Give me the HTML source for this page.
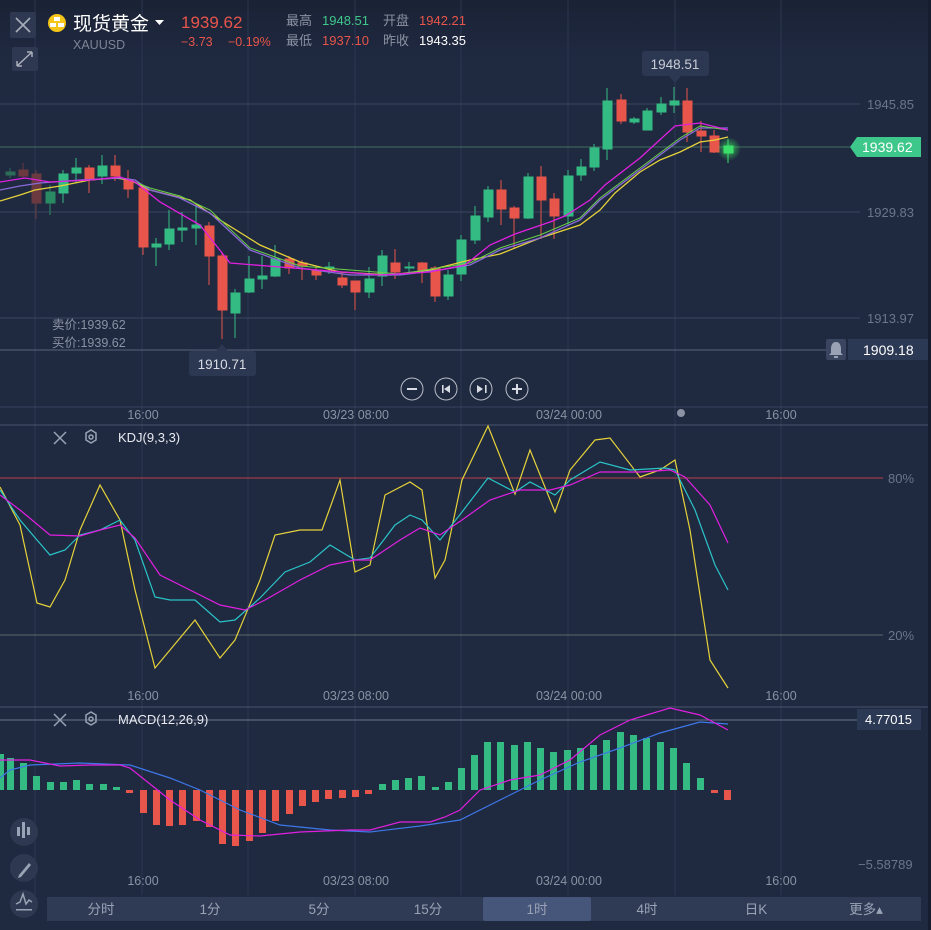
<!DOCTYPE html>
<html><head><meta charset="utf-8"><style>
*{margin:0;padding:0}
body{width:931px;height:930px;background:#1f2940;overflow:hidden;position:relative;font-family:"Liberation Sans","Noto Sans CJK SC",sans-serif}
.t{position:absolute;white-space:nowrap}
</style></head><body>
<svg width="931" height="930" style="position:absolute;left:0;top:0" font-family="Liberation Sans, Noto Sans CJK SC, sans-serif">
<defs><linearGradient id="tg" x1="0" y1="0" x2="0" y2="1"><stop offset="0" stop-color="#1a2235"/><stop offset="1" stop-color="#1f2940"/></linearGradient>
<radialGradient id="gl"><stop offset="0" stop-color="#3cff60" stop-opacity=".7"/><stop offset="1" stop-color="#3cff60" stop-opacity="0"/></radialGradient></defs>
<rect x="0" y="0" width="931" height="60" fill="url(#tg)"/>
<rect x="928" y="0" width="3" height="930" fill="#161d2e"/>
<!-- vertical grid -->
<g stroke="#2c3650" stroke-width="1">
<line x1="35" y1="0" x2="35" y2="895"/><line x1="142" y1="0" x2="142" y2="895"/><line x1="248" y1="0" x2="248" y2="895"/><line x1="355" y1="0" x2="355" y2="895"/><line x1="461" y1="0" x2="461" y2="895"/><line x1="568" y1="0" x2="568" y2="895"/><line x1="675" y1="0" x2="675" y2="895"/><line x1="781" y1="0" x2="781" y2="895"/>
</g>
<!-- horizontal grid main -->
<g stroke="#3a4560"><line x1="0" y1="104" x2="860" y2="104"/><line x1="0" y1="212" x2="860" y2="212"/><line x1="0" y1="318" x2="860" y2="318"/></g>
<line x1="0" y1="147" x2="850" y2="147" stroke="#3f6e60"/>
<line x1="0" y1="350" x2="826" y2="350" stroke="#5a6378"/>
<line x1="0" y1="407" x2="928" y2="407" stroke="#384360"/>
<line x1="0" y1="425" x2="928" y2="425" stroke="#4a546b"/>
<line x1="0" y1="478" x2="883" y2="478" stroke="#b8404a"/>
<line x1="0" y1="635" x2="883" y2="635" stroke="#5a6a70"/>
<line x1="0" y1="707" x2="928" y2="707" stroke="#4a546b"/>
<line x1="0" y1="720" x2="857" y2="720" stroke="#6a7388"/>
<!-- axis labels -->
<g fill="#6c7589" font-size="13"><text x="867" y="109">1945.85</text><text x="867" y="217">1929.83</text><text x="867" y="323">1913.97</text><text x="888" y="483">80%</text><text x="888" y="640">20%</text><text x="858" y="869">−5.58789</text></g>
<g fill="#8a92a3" font-size="12.5" text-anchor="middle"><text x="143" y="419">16:00</text><text x="356" y="419">03/23 08:00</text><text x="569" y="419">03/24 00:00</text><text x="781" y="419">16:00</text>
<text x="143" y="700">16:00</text><text x="356" y="700">03/23 08:00</text><text x="569" y="700">03/24 00:00</text><text x="781" y="700">16:00</text>
<text x="143" y="885">16:00</text><text x="356" y="885">03/23 08:00</text><text x="569" y="885">03/24 00:00</text><text x="781" y="885">16:00</text></g>
<circle cx="681" cy="413" r="4" fill="#8a92a3"/>
<!-- candles -->
<g stroke-width="1">
<g stroke="#2d6d5a" fill="#2d6d5a"><line x1="10" y1="168" x2="10" y2="178"/><rect x="6" y="172" width="9" height="3"/></g>
<g stroke="#6a3a40" fill="#6a3a40"><line x1="23" y1="163" x2="23" y2="178"/><rect x="19" y="170" width="9" height="6"/><line x1="36" y1="170" x2="36" y2="219"/><rect x="32" y="174" width="9" height="29"/></g>
<g stroke="#2a8a63" fill="#2a8a63"><line x1="50" y1="185" x2="50" y2="215"/><rect x="46" y="192" width="9" height="11"/></g>
<g stroke="#34bb83" fill="#34bb83">
<line x1="63" y1="170" x2="63" y2="203"/><rect x="59" y="174" width="9" height="19"/>
<line x1="76" y1="158" x2="76" y2="183"/><rect x="72" y="168" width="9" height="5"/>
<line x1="102" y1="155" x2="102" y2="184"/><rect x="98" y="166" width="9" height="10"/>
<line x1="156" y1="238" x2="156" y2="266"/><rect x="152" y="244" width="9" height="3"/>
<line x1="169" y1="210" x2="169" y2="250"/><rect x="165" y="229" width="9" height="15"/>
<line x1="182" y1="212" x2="182" y2="242"/><rect x="178" y="228" width="9" height="2"/>
<line x1="196" y1="205" x2="196" y2="245"/><rect x="192" y="225" width="9" height="3"/>
<line x1="235" y1="289" x2="235" y2="338"/><rect x="231" y="293" width="9" height="20"/>
<line x1="249" y1="256" x2="249" y2="293"/><rect x="245" y="279" width="9" height="13"/>
<line x1="262" y1="256" x2="262" y2="289"/><rect x="258" y="276" width="9" height="3"/>
<line x1="275" y1="245" x2="275" y2="277"/><rect x="271" y="259" width="9" height="17"/>
<line x1="329" y1="262" x2="329" y2="274"/><rect x="325" y="267" width="9" height="1"/>
<line x1="369" y1="267" x2="369" y2="298"/><rect x="365" y="279" width="9" height="13"/>
<line x1="382" y1="250" x2="382" y2="286"/><rect x="378" y="256" width="9" height="20"/>
<line x1="409" y1="262" x2="409" y2="272"/><rect x="405" y="267" width="9" height="1"/>
<line x1="448" y1="270" x2="448" y2="300"/><rect x="444" y="275" width="9" height="21"/>
<line x1="461" y1="235" x2="461" y2="281"/><rect x="457" y="240" width="9" height="34"/>
<line x1="475" y1="206" x2="475" y2="244"/><rect x="471" y="216" width="9" height="24"/>
<line x1="488" y1="186" x2="488" y2="222"/><rect x="484" y="190" width="9" height="27"/>
<line x1="528" y1="173" x2="528" y2="219"/><rect x="524" y="177" width="9" height="41"/>
<line x1="568" y1="170" x2="568" y2="226"/><rect x="564" y="176" width="9" height="40"/>
<line x1="581" y1="159" x2="581" y2="181"/><rect x="577" y="167" width="9" height="8"/>
<line x1="594" y1="144" x2="594" y2="171"/><rect x="590" y="148" width="9" height="19"/>
<line x1="607" y1="88" x2="607" y2="160"/><rect x="603" y="101" width="9" height="48"/>
<line x1="634" y1="117" x2="634" y2="124"/><rect x="630" y="119" width="9" height="3"/>
<line x1="647" y1="108" x2="647" y2="130"/><rect x="643" y="111" width="9" height="19"/>
<line x1="661" y1="97" x2="661" y2="115"/><rect x="657" y="104" width="9" height="8"/>
<line x1="674" y1="87" x2="674" y2="113"/><rect x="670" y="101" width="9" height="4"/>
</g>
<g stroke="#e8554a" fill="#e8554a">
<line x1="89" y1="165" x2="89" y2="193"/><rect x="85" y="168" width="9" height="12"/>
<line x1="115" y1="155" x2="115" y2="181"/><rect x="111" y="166" width="9" height="10"/>
<line x1="128" y1="170" x2="128" y2="198"/><rect x="124" y="180" width="9" height="9"/>
<line x1="143" y1="185" x2="143" y2="255"/><rect x="139" y="188" width="9" height="59"/>
<line x1="209" y1="222" x2="209" y2="285"/><rect x="205" y="226" width="9" height="30"/>
<line x1="222" y1="252" x2="222" y2="339"/><rect x="218" y="256" width="9" height="54"/>
<line x1="289" y1="256" x2="289" y2="274"/><rect x="285" y="259" width="9" height="9"/>
<line x1="302" y1="260" x2="302" y2="280"/><rect x="298" y="263" width="9" height="3"/>
<line x1="316" y1="266" x2="316" y2="280"/><rect x="312" y="270" width="9" height="5"/>
<line x1="342" y1="272" x2="342" y2="288"/><rect x="338" y="278" width="9" height="7"/>
<line x1="355" y1="281" x2="355" y2="310"/><rect x="351" y="281" width="9" height="11"/>
<line x1="395" y1="249" x2="395" y2="279"/><rect x="391" y="263" width="9" height="9"/>
<line x1="422" y1="262" x2="422" y2="283"/><rect x="418" y="263" width="9" height="7"/>
<line x1="435" y1="266" x2="435" y2="302"/><rect x="431" y="268" width="9" height="28"/>
<line x1="501" y1="180" x2="501" y2="225"/><rect x="497" y="190" width="9" height="19"/>
<line x1="514" y1="206" x2="514" y2="248"/><rect x="510" y="208" width="9" height="10"/>
<line x1="541" y1="166" x2="541" y2="239"/><rect x="537" y="177" width="9" height="23"/>
<line x1="554" y1="193" x2="554" y2="239"/><rect x="550" y="199" width="9" height="17"/>
<line x1="621" y1="94" x2="621" y2="124"/><rect x="617" y="100" width="9" height="21"/>
<line x1="687" y1="88" x2="687" y2="142"/><rect x="683" y="101" width="9" height="31"/>
<line x1="701" y1="121" x2="701" y2="152"/><rect x="697" y="131" width="9" height="5"/>
<line x1="714" y1="130" x2="714" y2="153"/><rect x="710" y="136" width="9" height="16"/>
</g>
<circle cx="729" cy="149" r="12" fill="url(#gl)"/>
<g stroke="#3be06a" fill="#3be06a"><line x1="728" y1="139" x2="728" y2="163"/><rect x="724" y="146" width="9" height="7"/></g>
</g>
<!-- MAs -->
<g fill="none" stroke-width="1.3">
<polyline stroke="#e6d23a" points="0,201 20,195 35,190 60,186 90,180 115,178 130,180 150,190 190,200 220,220 260,245 300,262 340,272 390,275 430,270 470,260 500,254 540,238 580,225 600,210 615,193 640,172 660,160 680,152 700,142 715,140 728,137"/>
<polyline stroke="#8a6ad8" points="0,190 20,186 40,183 80,180 120,178 135,180 150,190 180,198 210,213 250,250 300,268 350,275 400,275 440,270 470,265 500,250 540,238 580,220 600,200 620,185 640,170 660,155 680,140 700,128 728,128"/>
<polyline stroke="#6ad048" stroke-width="1" points="130,180 150,188 180,196 210,210 250,248 300,266 400,274 470,263 500,248 540,235 580,218 600,198 640,168 680,138 700,126 728,130"/>
<polyline stroke="#e020e0" points="0,182 25,178 50,182 90,180 120,177 135,182 160,202 200,225 230,263 280,267 330,271 380,275 430,272 465,265 490,245 515,234 550,222 565,216 590,200 605,185 640,158 675,126 700,123 728,130"/>
</g>
<!-- price tags -->
<polygon points="850,147 857,137 921,137 921,157 857,157" fill="#3ec78a"/>
<text x="862" y="152" fill="#fff" font-size="14">1939.62</text>
<rect x="826" y="339" width="20" height="21" rx="2" fill="#3a4560"/>
<path d="M836 342 c-4 0 -5 4 -5 7 v4 l-2 2 h14 l-2 -2 v-4 c0 -3 -1 -7 -5 -7z M834 356 h4 v2 h-4z" fill="#9aa3b5"/>
<rect x="848" y="339" width="80" height="21" fill="#2c3954"/>
<text x="863" y="355" fill="#fff" font-size="14">1909.18</text>
<rect x="642" y="51" width="67" height="25" rx="3" fill="#2c3852"/><polygon points="669,76 681,76 675,83" fill="#2c3852"/>
<text x="675" y="69" fill="#c8ccd6" font-size="13.5" text-anchor="middle">1948.51</text>
<rect x="189" y="351" width="67" height="25" rx="3" fill="#2c3852"/><polygon points="216,351 228,351 222,344" fill="#2c3852"/>
<text x="222" y="369" fill="#d8dce4" font-size="13.5" text-anchor="middle">1910.71</text>
<text x="52" y="329" fill="#8a92a3" font-size="12.5">卖价:1939.62</text>
<text x="52" y="347" fill="#8a92a3" font-size="12.5">买价:1939.62</text>
<!-- zoom buttons -->
<g fill="none" stroke="#b8bdc8" stroke-width="1"><circle cx="412" cy="389" r="11"/><circle cx="446" cy="389" r="11"/><circle cx="481" cy="389" r="11"/><circle cx="517" cy="389" r="11"/></g>
<g fill="#d8dce4"><rect x="407" y="388" width="10" height="2"/><rect x="512" y="388" width="10" height="2"/><rect x="516" y="384" width="2" height="10"/>
<rect x="442" y="385" width="1.6" height="8"/><polygon points="450,385 450,393 444,389"/><rect x="485" y="385" width="1.6" height="8"/><polygon points="477,385 477,393 483,389"/></g>
<!-- KDJ header -->
<g stroke="#9aa3b5" stroke-width="1.5" fill="none"><path d="M54 432 l12 12 M66 432 l-12 12"/><polygon points="86,433 91,430 96,433 96,440 91,443 86,440"/><circle cx="91" cy="437" r="2"/>
<path d="M54 714 l12 12 M66 714 l-12 12"/><polygon points="86,715 91,712 96,715 96,722 91,725 86,722"/><circle cx="91" cy="719" r="2"/></g>
<text x="118" y="442" fill="#e8eaf0" font-size="13">KDJ(9,3,3)</text>
<text x="118" y="724" fill="#e8eaf0" font-size="13">MACD(12,26,9)</text>
<g fill="none" stroke-width="1.2">
<polyline stroke="#e6d23a" points="0,487 20,525 37,603 50,607 65,580 80,530 100,485 120,520 135,590 155,668 170,650 195,620 220,658 235,640 260,580 275,535 300,530 322,530 340,480 355,572 370,565 385,495 410,482 422,490 435,578 445,560 462,480 488,426 515,494 530,450 555,512 570,470 595,440 610,438 640,477 660,470 675,460 690,530 710,660 728,688"/>
<polyline stroke="#2bc4c8" points="0,490 20,520 37,540 50,555 65,550 80,535 100,530 120,520 135,540 155,597 170,600 195,600 220,622 235,620 260,598 285,572 310,562 330,545 355,560 370,558 395,525 410,515 422,520 440,540 462,512 488,478 515,492 530,482 555,495 570,480 600,462 630,470 665,468 675,470 695,510 715,565 728,590"/>
<polyline stroke="#e020e0" points="0,495 20,510 50,535 80,536 100,530 120,525 135,538 160,575 190,590 220,605 245,610 265,600 300,580 330,565 355,560 370,560 400,540 420,528 440,535 462,520 490,500 520,490 550,490 570,485 600,472 640,472 670,470 685,477 710,505 728,543"/>
</g>
<!-- MACD bars -->
<g fill="#34bb83">
<rect x="0" y="754" width="4" height="36"/><rect x="7" y="758" width="7" height="32"/><rect x="20" y="763" width="7" height="27"/><rect x="33" y="776" width="7" height="14"/><rect x="47" y="782" width="7" height="8"/><rect x="60" y="782" width="7" height="8"/><rect x="73" y="780" width="7" height="10"/><rect x="86" y="784" width="7" height="6"/><rect x="100" y="784" width="7" height="6"/><rect x="113" y="787" width="7" height="3"/>
<rect x="379" y="784" width="7" height="6"/><rect x="392" y="780" width="7" height="10"/><rect x="405" y="778" width="7" height="12"/><rect x="418" y="776" width="7" height="14"/><rect x="432" y="787" width="7" height="3"/><rect x="445" y="782" width="7" height="8"/><rect x="458" y="768" width="7" height="22"/><rect x="471" y="755" width="7" height="35"/><rect x="484" y="742" width="7" height="48"/><rect x="497" y="742" width="7" height="48"/><rect x="511" y="745" width="7" height="45"/><rect x="524" y="742" width="7" height="48"/><rect x="537" y="748" width="7" height="42"/><rect x="550" y="752" width="7" height="38"/><rect x="564" y="750" width="7" height="40"/><rect x="577" y="748" width="7" height="42"/><rect x="590" y="745" width="7" height="45"/><rect x="603" y="740" width="7" height="50"/><rect x="617" y="732" width="7" height="58"/><rect x="630" y="735" width="7" height="55"/><rect x="643" y="738" width="7" height="52"/><rect x="657" y="742" width="7" height="48"/><rect x="670" y="748" width="7" height="42"/><rect x="683" y="763" width="7" height="27"/><rect x="697" y="778" width="7" height="12"/>
</g>
<g fill="#e8554a">
<rect x="126" y="790" width="7" height="3"/><rect x="140" y="790" width="7" height="23"/><rect x="153" y="790" width="7" height="35"/><rect x="166" y="790" width="7" height="36"/><rect x="179" y="790" width="7" height="35"/><rect x="193" y="790" width="7" height="31"/><rect x="206" y="790" width="7" height="37"/><rect x="219" y="790" width="7" height="54"/><rect x="232" y="790" width="7" height="56"/><rect x="246" y="790" width="7" height="51"/><rect x="259" y="790" width="7" height="43"/><rect x="272" y="790" width="7" height="31"/><rect x="286" y="790" width="7" height="24"/><rect x="299" y="790" width="7" height="16"/><rect x="312" y="790" width="7" height="12"/><rect x="325" y="790" width="7" height="9"/><rect x="339" y="790" width="7" height="8"/><rect x="352" y="790" width="7" height="7"/><rect x="365" y="790" width="7" height="4"/>
<rect x="711" y="790" width="7" height="3"/><rect x="724" y="790" width="7" height="10"/>
</g>
<g fill="none" stroke-width="1.2">
<polyline stroke="#3e78e8" points="0,778 10,770 30,765 80,763 130,765 170,778 200,790 240,810 280,825 330,830 370,832 420,826 460,820 500,800 540,780 580,762 620,748 660,733 700,722 728,724"/>
<polyline stroke="#e020e0" points="0,760 30,760 60,766 90,765 120,765 130,768 145,780 170,800 200,820 230,835 260,836 300,832 350,830 370,830 400,822 430,822 445,817 460,810 480,790 510,780 540,775 570,760 600,735 630,720 670,708 700,715 728,730"/>
</g>
<rect x="857" y="709" width="64" height="21" fill="#2c3954"/>
<text x="865" y="724" fill="#fff" font-size="13">4.77015</text>
<!-- left tools -->
<g fill="#2e3850"><circle cx="24" cy="832" r="14"/><circle cx="24" cy="868" r="14"/><circle cx="24" cy="904" r="14"/></g>
<g fill="#9aa3b5"><rect x="17" y="827" width="3" height="9"/><rect x="22" y="822" width="3" height="16"/><rect x="27" y="827" width="3" height="8"/></g>
<path d="M19 875 l10 -12 l2 2 l-10 12 l-3 1z" fill="#9aa3b5"/>
<path d="M16 904 l4 -2 l3 -8 l3 10 l3 -4 l3 2" fill="none" stroke="#9aa3b5" stroke-width="1.5"/><rect x="16" y="909" width="16" height="1.5" fill="#9aa3b5"/>
<!-- tab bar -->
<rect x="47" y="897" width="874" height="24" fill="#2f3b55"/>
<rect x="483" y="897" width="108" height="24" rx="2" fill="#46557a"/>
<g fill="#9aa3b5" font-size="13.5" text-anchor="middle"><text x="101" y="914">分时</text><text x="210" y="914">1分</text><text x="319" y="914">5分</text><text x="428" y="914">15分</text><text x="537" y="914">1时</text><text x="647" y="914">4时</text><text x="756" y="914">日K</text><text x="866" y="914">更多▴</text></g>
<!-- header -->
<rect x="10" y="12" width="26" height="26" rx="2" fill="#2e3850"/><path d="M16 18 l14 14 M30 18 l-14 14" stroke="#a8aebb" stroke-width="1.6"/>
<rect x="12" y="47" width="26" height="24" rx="2" fill="#2e3850"/><path d="M17 66 l15 -14 M17 66 v-5 M17 66 h5 M32 52 h-5 M32 52 v5" stroke="#a8aebb" stroke-width="1.5" fill="none"/>
<circle cx="57" cy="23" r="9" fill="#f5c518"/><g fill="#fff"><rect x="54" y="17" width="6" height="4"/><rect x="50" y="23" width="6" height="4"/><rect x="58" y="23" width="6" height="4"/></g>
<text x="73" y="30" fill="#fff" font-size="19">现货黄金</text><polygon points="155,20 164,20 159.5,25" fill="#fff"/>
<text x="73" y="49" fill="#7c8496" font-size="12.5">XAUUSD</text>
<text x="181" y="28" fill="#e8554a" font-size="17">1939.62</text>
<text x="181" y="46" fill="#e8554a" font-size="12.5">−3.73</text><text x="228" y="46" fill="#e8554a" font-size="12.5">−0.19%</text>
<g font-size="13"><text x="286" y="25" fill="#8a92a3">最高</text><text x="322" y="25" fill="#3ec78a">1948.51</text><text x="383" y="25" fill="#8a92a3">开盘</text><text x="419" y="25" fill="#e8554a">1942.21</text>
<text x="286" y="45" fill="#8a92a3">最低</text><text x="322" y="45" fill="#e8554a">1937.10</text><text x="383" y="45" fill="#8a92a3">昨收</text><text x="419" y="45" fill="#fff">1943.35</text></g>
</svg>
</body></html>
